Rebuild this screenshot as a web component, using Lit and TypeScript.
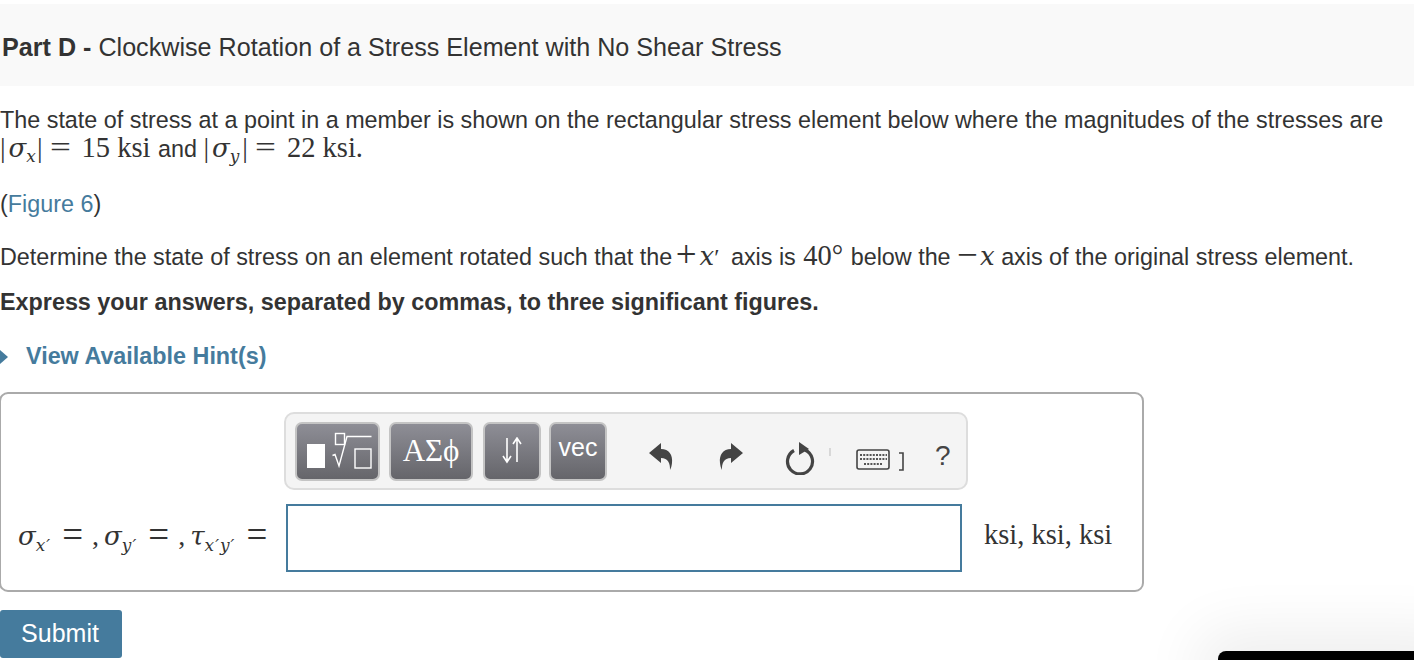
import { LitElement, html, css } from 'lit';
import { customElement } from 'lit/decorators.js';

@customElement('app-root')
export class AppRoot extends LitElement {
  static styles = css`
    :host {
      display: block;
      position: relative;
      width: 1414px;
      height: 660px;
      overflow: hidden;
      background: #fff;
      color: #333;
      font-family: 'Liberation Sans', Arial, sans-serif;
      font-size: 23.35px;
    }
    .banner {
      margin-top: 4px;
      height: 82px;
      background: #f9f9f9;
      display: flex;
      align-items: center;
      padding-left: 2px;
      padding-top: 5px;
      box-sizing: border-box;
      font-size: 25.15px;
    }
    .content {
      padding-top: 20px;
    }
    p {
      margin: 0;
      line-height: 28px;
      height: 28px;
      white-space: nowrap;
    }
    .figure { margin-top: 28px; }
    .task { margin-top: 24px; }
    .express { margin-top: 18px; font-weight: 700; }
    a { color: #457b9d; text-decoration: none; }
    .m {
      font-family: 'Liberation Serif', 'DejaVu Serif', serif;
      font-size: 28.5px;
    }
    .m i {
      font-family: 'DejaVu Serif', serif;
      font-size: 26px;
      line-height: 0;
    }
    .sym { margin-left: 3px; }
    .m sub {
      font-family: 'DejaVu Serif', serif;
      font-size: 17px;
      font-style: italic;
      vertical-align: -5px;
      line-height: 0;
      margin-right: 1px;
    }
    .m sub.tail { margin-right: 3px; }
    .first { margin-right: 1px; }
    .op {
      display: inline-block;
      width: 16px;
      transform: scaleX(1.3);
      transform-origin: left center;
      margin: 0 16px 0 7px;
    }
    .sign {
      font-size: 37px;
      line-height: 0;
      vertical-align: -2px;
    }
    .sign.plus { margin: 0 3px 0 -3px; }
    .sign.minus { margin-right: 2px; }
    .prime { margin-right: 5px; font-size: 24px; }
    .deg { margin-left: 1px; margin-right: 1px; }
    .bar { font-size: 28px; }
    .hints {
      margin-top: 26px;
      display: flex;
      align-items: center;
      gap: 18px;
      font-weight: 700;
      color: #457b9d;
      height: 29px;
    }
    .hints svg { display: block; }
    .answer {
      margin: 21px 0 0 -1px;
      width: 1145px;
      height: 200px;
      box-sizing: border-box;
      border: 2px solid #aaa;
      border-radius: 9px;
      padding: 18px 0 0 283px;
      position: relative;
    }
    .toolbar {
      width: 684px;
      height: 78px;
      box-sizing: border-box;
      border: 2px solid #ddd;
      border-radius: 10px;
      background: #f4f4f4;
      display: flex;
      align-items: center;
      padding: 0 9px;
    }
    .btn {
      height: 59px;
      box-sizing: border-box;
      border: 2px solid #c4c4c4;
      border-radius: 7px;
      background: linear-gradient(#8e8e96, #65656a);
      color: #fff;
      display: flex;
      align-items: center;
      justify-content: center;
      margin-right: 9px;
      flex: none;
    }
    .b1 { width: 85px; }
    .b2 { width: 84px; font-family: 'Liberation Serif', serif; font-size: 31px; margin-right: 10px; }
    .b3 { width: 58px; margin-right: 8px; }
    .b4 { width: 58px; font-size: 25px; padding-bottom: 8px; }
    .tools {
      flex: 1;
      position: relative;
      height: 100%;
    }
    .tools svg, .tools span { position: absolute; }
    .q { left: 319px; top: 26px; font-size: 28px; line-height: 32px; color: #444; }
    .row {
      display: flex;
      align-items: center;
      margin-top: 14px;
      margin-left: -283px;
      height: 68px;
    }
    .labels {
      width: 285px;
      box-sizing: border-box;
      padding: 0 0 4px 17px;
      white-space: nowrap;
      font-family: 'Liberation Serif', serif;
      font-size: 28px;
    }
    .labels i {
      font-family: 'DejaVu Serif', serif;
      font-size: 26px;
      line-height: 0;
    }
    .labels sub {
      font-family: 'DejaVu Serif', serif;
      font-size: 17px;
      font-style: italic;
      letter-spacing: 1px;
      vertical-align: -6px;
      line-height: 0;
    }
    .eq {
      font-size: 37px;
      line-height: 0;
      vertical-align: -2px;
      margin: 0 9px 0 11px;
    }
    .eq.last { margin-right: 0; }
    .comma { margin-right: 5px; }
    .input {
      width: 676px;
      height: 68px;
      box-sizing: border-box;
      border: 2px solid #457b9d;
      background: #fff;
      flex: none;
    }
    .units {
      margin-left: 22px;
      padding-bottom: 6px;
      font-family: 'Liberation Serif', serif;
      font-size: 28.5px;
      white-space: nowrap;
    }
    .submit {
      margin-top: 18px;
      width: 122px;
      height: 48px;
      box-sizing: border-box;
      padding: 0 2px 2px 0;
      background: #457b9d;
      color: #fff;
      border-radius: 3px;
      display: flex;
      align-items: center;
      justify-content: center;
      font-size: 25px;
    }
    .corner {
      position: absolute;
      left: 1218px;
      top: 651px;
      width: 230px;
      height: 40px;
      background: #000;
      border-radius: 8px;
      box-shadow: 0 0 60px 20px rgba(0, 0, 0, 0.07);
    }
  `;

  render() {
    return html`
      <div class="banner"><span><b>Part D - </b>Clockwise Rotation of a Stress Element with No Shear Stress</span></div>
      <div class="content">
        <p>The state of stress at a point in a member is shown on the rectangular stress element below where the magnitudes of the stresses are</p>
        <p>
          <span class="m first"><span class="bar">|</span><i class="sym">σ</i><sub>x</sub><span class="bar">|</span><span class="op">=</span>15 ksi</span> and
          <span class="m"><span class="bar">|</span><i class="sym">σ</i><sub class="tail">y</sub><span class="bar">|</span><span class="op">=</span>22 ksi.</span>
        </p>
        <p class="figure">(<a>Figure 6</a>)</p>
        <p class="task">
          Determine the state of stress on an element rotated such that the <span class="m"><span class="sign plus">+</span><i>x</i><span class="prime">′</span></span> axis is
          <span class="m deg">40°</span> below the <span class="m"><span class="sign minus">−</span><i>x</i></span> axis of the original stress element.
        </p>
        <p class="express">Express your answers, separated by commas, to three significant figures.</p>
        <div class="hints">
          <svg width="8" height="16" viewBox="0 0 8 16"><path d="M-1 0 8 8-1 16Z" fill="#457b9d" /></svg>
          <span>View Available Hint(s)</span>
        </div>
        <div class="answer">
          <div class="toolbar">
            <div class="btn b1">
              <svg width="72" height="46" viewBox="0 0 72 46" fill="none" stroke="#fff" stroke-width="1.4">
                <rect x="5" y="16" width="18" height="24" fill="#fff" stroke="none" />
                <rect x="33.5" y="5.5" width="9" height="11" />
                <path d="M30.5 27.5 33 26.5 37 38 45 8.5H69.5" />
                <rect x="53" y="21" width="16" height="19" />
              </svg>
            </div>
            <div class="btn b2">ΑΣϕ</div>
            <div class="btn b3">
              <svg width="24" height="28" viewBox="0 0 24 28" fill="none" stroke="#fff" stroke-width="1.6">
                <path d="M7 1v24M3 19l4 6 4-6M17 25V1M13 7l4-6 4 6" />
              </svg>
            </div>
            <div class="btn b4">vec</div>
            <div class="tools">
              <svg style="left:32px;top:28px" width="26" height="30" viewBox="0 0 26 30">
                <path d="M1 11 13 1v6c8 0 12 6 11 14-.3 3-1 5-2 7 .3-7-2-12-9-12v5Z" fill="#444" />
              </svg>
              <svg style="left:102px;top:28px" width="26" height="30" viewBox="0 0 26 30">
                <path d="M25 11 13 1v6C5 7 1 13 2 21c.3 3 1 5 2 7-.3-7 2-12 9-12v5Z" fill="#444" />
              </svg>
              <svg style="left:169px;top:27px" width="32" height="34" viewBox="0 0 32 34" fill="none">
                <path d="M9 9.5a12.5 12.5 0 1 0 11-.5" stroke="#444" stroke-width="3.2" />
                <path d="M14 1l10 7-10 6Z" fill="#444" />
              </svg>
              <svg style="left:213px;top:33px" width="5" height="10" viewBox="0 0 5 10"><path d="M1 1v8" stroke="#bbb" stroke-width="1" /></svg>
              <svg style="left:240px;top:35px" width="35" height="22" viewBox="0 0 35 22" fill="none">
                <rect x="1" y="1" width="32" height="19" rx="2" stroke="#444" stroke-width="1.6" />
                <path d="M4 6h27M4 10h27M8 15h18" stroke="#555" stroke-width="2" stroke-dasharray="2 1.2" />
              </svg>
              <svg style="left:282px;top:38px" width="8" height="20" viewBox="0 0 8 20" fill="none">
                <path d="M1 1h4v17H1" stroke="#444" stroke-width="1.6" />
              </svg>
              <span class="q">?</span>
            </div>
          </div>
          <div class="row">
            <div class="labels">
              <i>σ</i><sub>x′</sub><span class="eq">=</span><span class="comma">,</span><i>σ</i><sub>y′</sub><span class="eq">=</span><span class="comma">,</span><i>τ</i><sub>x′y′</sub><span class="eq last">=</span>
            </div>
            <div class="input"></div>
            <div class="units">ksi, ksi, ksi</div>
          </div>
        </div>
        <div class="submit">Submit</div>
      </div>
      <div class="corner"></div>
    `;
  }
}
